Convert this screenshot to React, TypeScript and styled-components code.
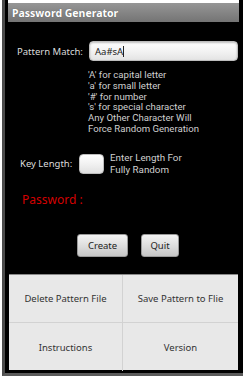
import React from "react";
import styled, { createGlobalStyle } from "styled-components";

const Global = createGlobalStyle`
  html, body { margin: 0; padding: 0; background: #ffffff; }
  body { font-family: "Noto Sans", "Open Sans", sans-serif; }
  * { box-sizing: border-box; }
`;

const Frame = styled.div`
  margin-left: 2px;
  width: 241px;
  height: 376px;
  background: #000;
  border-left: 3px solid #4c4c4c;
  border-bottom: 3px solid #5a5a5a;
  padding: 0 4px 3px 3px;
  display: flex;
  flex-direction: column;
`;

const StatusStrip = styled.div`
  height: 3px;
  background: #fff;
  flex: none;
`;

const TitleBar = styled.div`
  height: 19px;
  flex: none;
  background: linear-gradient(#969696, #747474);
  color: #fff;
  font-weight: 700;
  font-size: 10.5px;
  display: flex;
  align-items: center;
  padding-left: 4px;
  text-shadow: 0 0 1px rgba(0,0,0,0.4);
`;

const Body = styled.div`
  flex: 1;
  display: flex;
  flex-direction: column;
`;

const Row = styled.div<{ $top: number; $left: number }>`
  display: flex;
  align-items: center;
  margin-top: ${(p) => p.$top}px;
  padding-left: ${(p) => p.$left}px;
`;

const Label = styled.span<{ $w: number }>`
  color: #dcdcdc;
  font-size: 9.5px;
  width: ${(p) => p.$w}px;
  flex: none;
`;

const TextInput = styled.div`
  width: 149px;
  height: 20px;
  border-radius: 4px;
  background: linear-gradient(#ffffff, #f0f0f0 60%, #e4e4e4);
  border: 1px solid #bdbdbd;
  box-shadow: inset 0 1px 2px rgba(0,0,0,0.25);
  display: flex;
  align-items: center;
  padding-left: 5px;
  font-size: 9.5px;
  color: #222;
`;

const Caret = styled.span`
  display: inline-block;
  width: 1px;
  height: 11px;
  background: #222;
`;

const HelpBlock = styled.div`
  margin-top: 9px;
  padding-left: 80px;
  color: #cfcfcf;
  font-family: Roboto, "Noto Sans", sans-serif;
  font-size: 9.6px;
  line-height: 10.8px;
`;

const SmallBox = styled.div`
  width: 25px;
  height: 20px;
  border-radius: 4px;
  background: linear-gradient(#ffffff, #eeeeee 60%, #e0e0e0);
  border: 1px solid #bdbdbd;
  flex: none;
`;

const SideNote = styled.div`
  margin-left: 6px;
  color: #cfcfcf;
  font-family: Roboto, "Noto Sans", sans-serif;
  font-size: 9.8px;
  line-height: 12px;
`;

const PasswordLabel = styled.div`
  margin-top: 16px;
  padding-left: 14px;
  color: #d40000;
  font-size: 12px;
  line-height: 16px;
`;

const ButtonRow = styled.div`
  display: flex;
  gap: 13px;
  padding-left: 69px;
  margin-top: 26px;
`;

const Button = styled.div<{ $w: number }>`
  width: ${(p) => p.$w}px;
  height: 23px;
  border-radius: 3px;
  background: linear-gradient(#f4f4f4, #dcdcdc 55%, #c6c6c6);
  border: 1px solid #9a9a9a;
  display: flex;
  align-items: center;
  justify-content: center;
  font-size: 9.5px;
  color: #222;
`;

const Grid = styled.div`
  margin-top: auto;
  margin-left: 1px;
  margin-right: 1px;
  height: 96px;
  display: grid;
  grid-template-columns: 114px 1fr;
  grid-template-rows: 48px 48px;
  background: #e8e8e8;
  border-top: 1px solid #8a8a8a;
`;

const Cell = styled.div<{ $right?: boolean; $bottom?: boolean }>`
  display: flex;
  align-items: center;
  justify-content: center;
  font-size: 9.5px;
  color: #333;
  border-right: ${(p) => (p.$right ? "1px solid #d2d2d2" : "none")};
  border-bottom: ${(p) => (p.$bottom ? "1px solid #d2d2d2" : "none")};
`;

export default function App() {
  return (
    <>
      <Global />
      <Frame>
        <StatusStrip />
        <TitleBar>Password Generator</TitleBar>
        <Body>
          <Row $top={19} $left={9}>
            <Label $w={72}>Pattern Match:</Label>
            <TextInput>
              Aa#sA<Caret />
            </TextInput>
          </Row>
          <HelpBlock>
            <div>'A' for capital letter</div>
            <div>'a' for small letter</div>
            <div>'#' for number</div>
            <div>'s' for special character</div>
            <div>Any Other Character Will</div>
            <div>Force Random Generation</div>
          </HelpBlock>
          <Row $top={17} $left={12}>
            <Label $w={59}>Key Length:</Label>
            <SmallBox />
            <SideNote>
              <div>Enter Length For</div>
              <div>Fully Random</div>
            </SideNote>
          </Row>
          <PasswordLabel>Password :</PasswordLabel>
          <ButtonRow>
            <Button $w={51}>Create</Button>
            <Button $w={38}>Quit</Button>
          </ButtonRow>
          <Grid>
            <Cell $right $bottom>Delete Pattern File</Cell>
            <Cell $bottom>Save Pattern to Flie</Cell>
            <Cell $right>Instructions</Cell>
            <Cell>Version</Cell>
          </Grid>
        </Body>
      </Frame>
    </>
  );
}
